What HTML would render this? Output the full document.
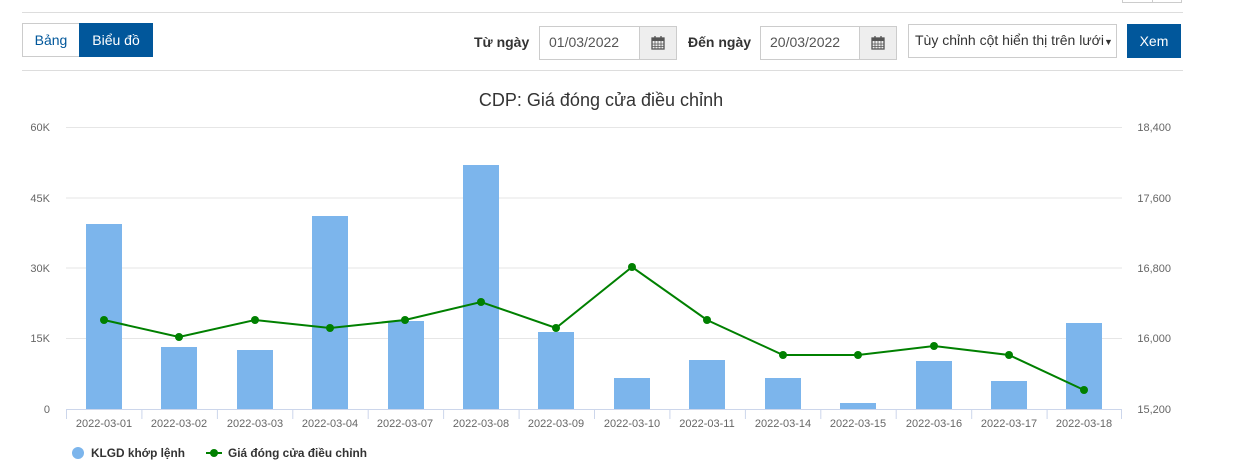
<!DOCTYPE html>
<html><head><meta charset="utf-8"><style>
body{margin:0;width:1253px;height:475px;background:#fff;font-family:"Liberation Sans",Arial,sans-serif;position:relative;overflow:hidden}
.a{position:absolute;box-sizing:border-box}
.btn{font-size:14px;line-height:32px;text-align:center}
.inp{border:1px solid #ccc;font-size:14px;color:#555;line-height:31px;padding-left:9px}
.add{border:1px solid #ccc;background:#eee}
.lbl{font-size:14px;font-weight:bold;color:#333}
</style></head><body>
<div class="a" style="left:1122px;top:-4px;width:60px;height:7px;border:1px solid #ccc"></div>
<div class="a" style="left:1152px;top:0;width:1px;height:3px;background:#ccc"></div>
<div class="a" style="left:22px;top:12px;width:1161px;height:1px;background:#ddd"></div>
<div class="a" style="left:22px;top:70px;width:1161px;height:1px;background:#ddd"></div>
<div class="a btn" style="left:22px;top:23px;width:58px;height:34px;border:1px solid #ccc;color:#01579b">Bảng</div>
<div class="a btn" style="left:79px;top:23px;width:74px;height:34px;background:#01579b;color:#fff;line-height:34px">Biểu đồ</div>
<div class="a lbl" style="left:474px;top:34px">Từ ngày</div>
<div class="a inp" style="left:539px;top:26px;width:101px;height:34px">01/03/2022</div>
<div class="a add" style="left:639px;top:26px;width:38px;height:34px"></div>
<div class="a lbl" style="left:688px;top:34px">Đến ngày</div>
<div class="a inp" style="left:760px;top:26px;width:100px;height:34px">20/03/2022</div>
<div class="a add" style="left:859px;top:26px;width:38px;height:34px"></div>
<svg class="a" style="left:651px;top:36px" width="14" height="14"><rect x="1" y="2" width="12" height="11" fill="none" stroke="#555" stroke-width="1.3"/><rect x="1" y="2" width="12" height="3" fill="#555"/><path d="M1 8H13M1 10.5H13M4 5V13M7 5V13M10 5V13" stroke="#555" stroke-width=".8"/><path d="M4 0V3M10 0V3" stroke="#555" stroke-width="1.3"/></svg>
<svg class="a" style="left:871px;top:36px" width="14" height="14"><rect x="1" y="2" width="12" height="11" fill="none" stroke="#555" stroke-width="1.3"/><rect x="1" y="2" width="12" height="3" fill="#555"/><path d="M1 8H13M1 10.5H13M4 5V13M7 5V13M10 5V13" stroke="#555" stroke-width=".8"/><path d="M4 0V3M10 0V3" stroke="#555" stroke-width="1.3"/></svg>
<div class="a inp" style="left:908px;top:24px;width:209px;height:34px;color:#333;padding-left:6px">Tùy chỉnh cột hiển thị trên lưới<span style="font-size:9px">▼</span></div>
<div class="a btn" style="left:1127px;top:24px;width:54px;height:34px;background:#01579b;color:#fff;line-height:34px">Xem</div>
<svg class="a" style="left:0;top:0" width="1253" height="475" font-family="Liberation Sans,Arial,sans-serif">
<text x="601" y="106" text-anchor="middle" font-size="18" fill="#333">CDP: Giá đóng cửa điều chỉnh</text>
<g stroke="#e6e6e6"><path d="M66 127.5H1122M66 198H1122M66 268H1122M66 338.5H1122"/></g>
<g font-size="11" fill="#666" text-anchor="end"><text x="50" y="131">60K</text><text x="50" y="202">45K</text><text x="50" y="272">30K</text><text x="50" y="342">15K</text><text x="50" y="413">0</text></g>
<g font-size="11" fill="#666" text-anchor="end"><text x="1171" y="131">18,400</text><text x="1171" y="202">17,600</text><text x="1171" y="272">16,800</text><text x="1171" y="342">16,000</text><text x="1171" y="413">15,200</text></g>
<g fill="#7cb5ec">
<rect x="86" y="224" width="36" height="185"/><rect x="161" y="347" width="36" height="62"/><rect x="237" y="350" width="36" height="59"/><rect x="312" y="216" width="36" height="193"/><rect x="388" y="321" width="36" height="88"/><rect x="463" y="165" width="36" height="244"/><rect x="538" y="332" width="36" height="77"/><rect x="614" y="378" width="36" height="31"/><rect x="689" y="360" width="36" height="49"/><rect x="765" y="378" width="36" height="31"/><rect x="840" y="403" width="36" height="6"/><rect x="916" y="361" width="36" height="48"/><rect x="991" y="381" width="36" height="28"/><rect x="1066" y="323" width="36" height="86"/>
</g>
<path d="M66 409.5H1122" stroke="#ccd6eb"/>
<g stroke="#ccd6eb"><path d="M66.5 409V419M141.9 409V419M217.4 409V419M292.8 409V419M368.2 409V419M443.6 409V419M519.1 409V419M594.5 409V419M669.9 409V419M745.4 409V419M820.8 409V419M896.2 409V419M971.7 409V419M1047.1 409V419M1121.5 409V419"/></g>
<g font-size="11" fill="#666" text-anchor="middle">
<text x="104" y="427">2022-03-01</text><text x="179" y="427">2022-03-02</text><text x="255" y="427">2022-03-03</text><text x="330" y="427">2022-03-04</text><text x="405" y="427">2022-03-07</text><text x="481" y="427">2022-03-08</text><text x="556" y="427">2022-03-09</text><text x="632" y="427">2022-03-10</text><text x="707" y="427">2022-03-11</text><text x="783" y="427">2022-03-14</text><text x="858" y="427">2022-03-15</text><text x="934" y="427">2022-03-16</text><text x="1009" y="427">2022-03-17</text><text x="1084" y="427">2022-03-18</text>
</g>
<polyline fill="none" stroke="#008000" stroke-width="2" points="104,320 179,337 255,320 330,328 405,320 481,302 556,328 632,267 707,320 783,355 858,355 934,346 1009,355 1084,390"/>
<g fill="#008000"><circle cx="104" cy="320" r="4"/><circle cx="179" cy="337" r="4"/><circle cx="255" cy="320" r="4"/><circle cx="330" cy="328" r="4"/><circle cx="405" cy="320" r="4"/><circle cx="481" cy="302" r="4"/><circle cx="556" cy="328" r="4"/><circle cx="632" cy="267" r="4"/><circle cx="707" cy="320" r="4"/><circle cx="783" cy="355" r="4"/><circle cx="858" cy="355" r="4"/><circle cx="934" cy="346" r="4"/><circle cx="1009" cy="355" r="4"/><circle cx="1084" cy="390" r="4"/></g>
<circle cx="78" cy="453" r="6" fill="#7cb5ec"/>
<text x="91" y="457" font-size="12" font-weight="bold" fill="#333" textLength="94" lengthAdjust="spacingAndGlyphs">KLGD khớp lệnh</text>
<path d="M206 453H222" stroke="#008000" stroke-width="2"/><circle cx="214" cy="453" r="4" fill="#008000"/>
<text x="228" y="457" font-size="12" font-weight="bold" fill="#333" textLength="139" lengthAdjust="spacingAndGlyphs">Giá đóng cửa điều chỉnh</text>
</svg>
</body></html>
